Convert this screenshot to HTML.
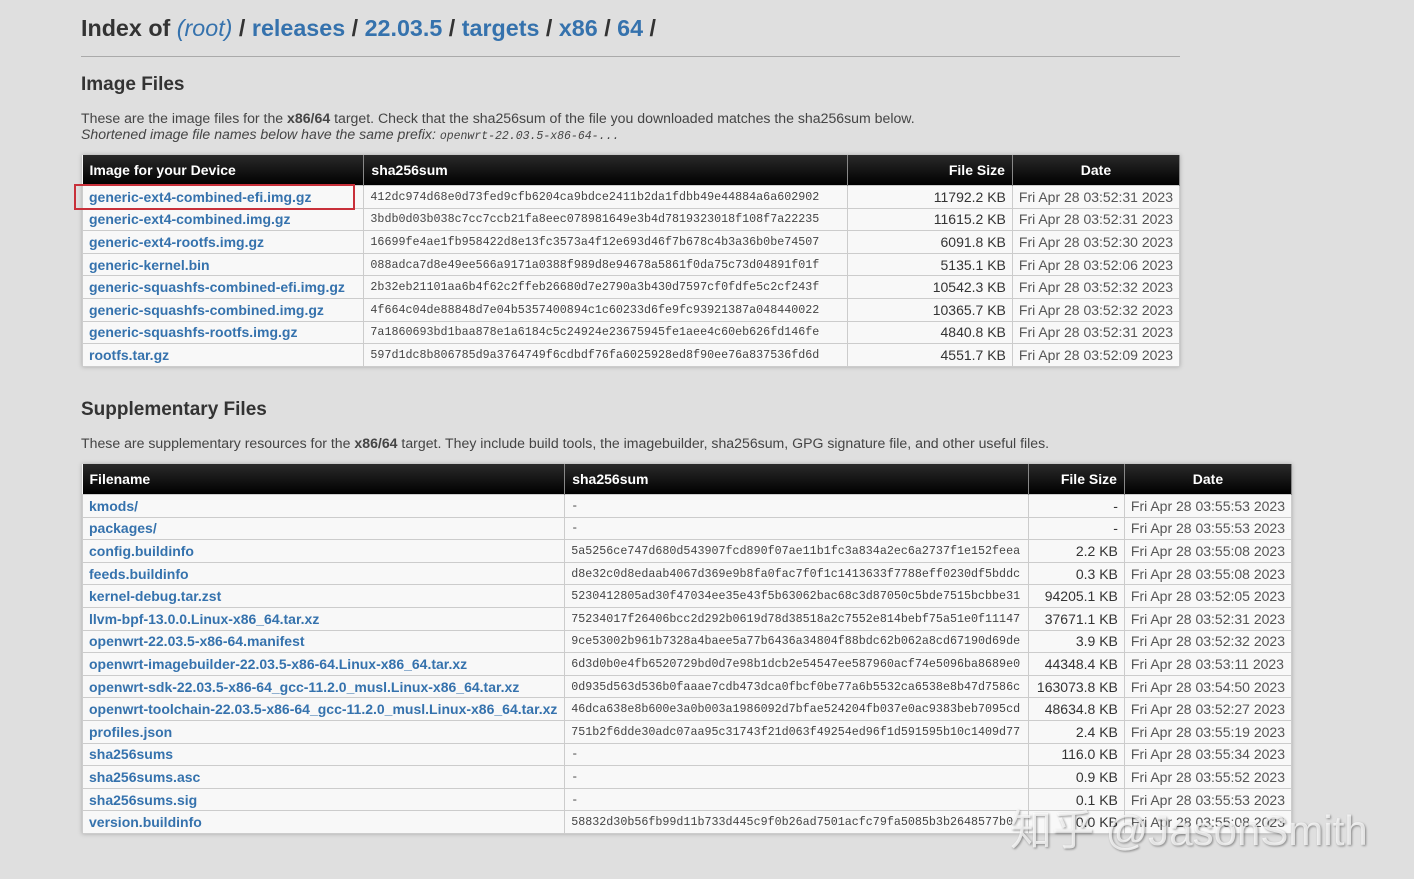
<!DOCTYPE html><html><head><meta charset="utf-8"><style>
body{margin:0;background:#dfdfdf;font-family:"Liberation Sans",sans-serif;color:#333;width:1414px;height:879px;overflow:hidden;position:relative}
h1{position:absolute;left:81px;top:15px;margin:0;font-size:23.3px;font-weight:bold;color:#333}
a{color:#3572ad;text-decoration:none}
.hr{position:absolute;left:81px;top:56px;width:1099px;border-top:1px solid #aaa}
h2{position:absolute;left:81px;margin:0;font-size:19px;font-weight:bold;color:#333}
p{position:absolute;left:81px;margin:0;font-size:14.1px;color:#444;line-height:16px}
table{position:absolute;left:82px;border-collapse:collapse;font-size:14px;box-shadow:0 0 4px #aaa;background:#f8f8f8}
th{background:linear-gradient(#2a2a2a,#000);color:#fff;font-weight:bold;text-align:left;padding:0 7px;height:30px;border-right:1px solid #888}
td{height:21.6px;padding:0 6px;border:1px solid #ccc;white-space:nowrap}
td.n a{font-weight:bold}
td.h{font-family:"Liberation Mono",monospace;font-size:11.7px;color:#444}
td.s,th.s{text-align:right}
th.d{text-align:center}
td.d{color:#555}
.wm{position:absolute;left:1010px;top:797px;font-size:42px;color:rgba(255,255,255,.75);font-family:"Liberation Sans","Noto Sans CJK SC",sans-serif;text-shadow:1px 1px 2px rgba(0,0,0,.4)}
</style></head><body>
<h1>Index of <a href="#"><i style="font-weight:normal">(root)</i></a> / <a href="#">releases</a> / <a href="#">22.03.5</a> / <a href="#">targets</a> / <a href="#">x86</a> / <a href="#">64</a> /</h1>
<div class="hr"></div>
<h2 style="top:74px">Image Files</h2>
<p style="top:110px">These are the image files for the <b>x86/64</b> target. Check that the sha256sum of the file you downloaded matches the sha256sum below.<br><i>Shortened image file names below have the same prefix: <span style="font-family:'Liberation Mono',monospace;font-size:11.5px">openwrt-22.03.5-x86-64-...</span></i></p>
<table style="top:155px;width:1098px">
<tr><th style="width:267px">Image for your Device</th><th style="width:469px">sha256sum</th><th class="s" style="width:150px">File Size</th><th class="d">Date</th></tr>
<tr><td class="n"><a href="#">generic-ext4-combined-efi.img.gz</a></td><td class="h">412dc974d68e0d73fed9cfb6204ca9bdce2411b2da1fdbb49e44884a6a602902</td><td class="s">11792.2 KB</td><td class="d">Fri Apr 28 03:52:31 2023</td></tr>
<tr><td class="n"><a href="#">generic-ext4-combined.img.gz</a></td><td class="h">3bdb0d03b038c7cc7ccb21fa8eec078981649e3b4d7819323018f108f7a22235</td><td class="s">11615.2 KB</td><td class="d">Fri Apr 28 03:52:31 2023</td></tr>
<tr><td class="n"><a href="#">generic-ext4-rootfs.img.gz</a></td><td class="h">16699fe4ae1fb958422d8e13fc3573a4f12e693d46f7b678c4b3a36b0be74507</td><td class="s">6091.8 KB</td><td class="d">Fri Apr 28 03:52:30 2023</td></tr>
<tr><td class="n"><a href="#">generic-kernel.bin</a></td><td class="h">088adca7d8e49ee566a9171a0388f989d8e94678a5861f0da75c73d04891f01f</td><td class="s">5135.1 KB</td><td class="d">Fri Apr 28 03:52:06 2023</td></tr>
<tr><td class="n"><a href="#">generic-squashfs-combined-efi.img.gz</a></td><td class="h">2b32eb21101aa6b4f62c2ffeb26680d7e2790a3b430d7597cf0fdfe5c2cf243f</td><td class="s">10542.3 KB</td><td class="d">Fri Apr 28 03:52:32 2023</td></tr>
<tr><td class="n"><a href="#">generic-squashfs-combined.img.gz</a></td><td class="h">4f664c04de88848d7e04b5357400894c1c60233d6fe9fc93921387a048440022</td><td class="s">10365.7 KB</td><td class="d">Fri Apr 28 03:52:32 2023</td></tr>
<tr><td class="n"><a href="#">generic-squashfs-rootfs.img.gz</a></td><td class="h">7a1860693bd1baa878e1a6184c5c24924e23675945fe1aee4c60eb626fd146fe</td><td class="s">4840.8 KB</td><td class="d">Fri Apr 28 03:52:31 2023</td></tr>
<tr><td class="n"><a href="#">rootfs.tar.gz</a></td><td class="h">597d1dc8b806785d9a3764749f6cdbdf76fa6025928ed8f90ee76a837536fd6d</td><td class="s">4551.7 KB</td><td class="d">Fri Apr 28 03:52:09 2023</td></tr>
</table>
<div style="position:absolute;left:74px;top:184px;width:281px;height:26px;border:2px solid #c8303a;box-sizing:border-box"></div>
<h2 style="top:399px">Supplementary Files</h2>
<p style="top:435px">These are supplementary resources for the <b>x86/64</b> target. They include build tools, the imagebuilder, sha256sum, GPG signature file, and other useful files.</p>
<table style="top:464px;width:1210px">
<tr><th style="width:468px">Filename</th><th style="width:449px">sha256sum</th><th class="s" style="width:82px">File Size</th><th class="d">Date</th></tr>
<tr><td class="n"><a href="#">kmods/</a></td><td class="h">-</td><td class="s">-</td><td class="d">Fri Apr 28 03:55:53 2023</td></tr>
<tr><td class="n"><a href="#">packages/</a></td><td class="h">-</td><td class="s">-</td><td class="d">Fri Apr 28 03:55:53 2023</td></tr>
<tr><td class="n"><a href="#">config.buildinfo</a></td><td class="h">5a5256ce747d680d543907fcd890f07ae11b1fc3a834a2ec6a2737f1e152feea</td><td class="s">2.2 KB</td><td class="d">Fri Apr 28 03:55:08 2023</td></tr>
<tr><td class="n"><a href="#">feeds.buildinfo</a></td><td class="h">d8e32c0d8edaab4067d369e9b8fa0fac7f0f1c1413633f7788eff0230df5bddc</td><td class="s">0.3 KB</td><td class="d">Fri Apr 28 03:55:08 2023</td></tr>
<tr><td class="n"><a href="#">kernel-debug.tar.zst</a></td><td class="h">5230412805ad30f47034ee35e43f5b63062bac68c3d87050c5bde7515bcbbe31</td><td class="s">94205.1 KB</td><td class="d">Fri Apr 28 03:52:05 2023</td></tr>
<tr><td class="n"><a href="#">llvm-bpf-13.0.0.Linux-x86_64.tar.xz</a></td><td class="h">75234017f26406bcc2d292b0619d78d38518a2c7552e814bebf75a51e0f11147</td><td class="s">37671.1 KB</td><td class="d">Fri Apr 28 03:52:31 2023</td></tr>
<tr><td class="n"><a href="#">openwrt-22.03.5-x86-64.manifest</a></td><td class="h">9ce53002b961b7328a4baee5a77b6436a34804f88bdc62b062a8cd67190d69de</td><td class="s">3.9 KB</td><td class="d">Fri Apr 28 03:52:32 2023</td></tr>
<tr><td class="n"><a href="#">openwrt-imagebuilder-22.03.5-x86-64.Linux-x86_64.tar.xz</a></td><td class="h">6d3d0b0e4fb6520729bd0d7e98b1dcb2e54547ee587960acf74e5096ba8689e0</td><td class="s">44348.4 KB</td><td class="d">Fri Apr 28 03:53:11 2023</td></tr>
<tr><td class="n"><a href="#">openwrt-sdk-22.03.5-x86-64_gcc-11.2.0_musl.Linux-x86_64.tar.xz</a></td><td class="h">0d935d563d536b0faaae7cdb473dca0fbcf0be77a6b5532ca6538e8b47d7586c</td><td class="s">163073.8 KB</td><td class="d">Fri Apr 28 03:54:50 2023</td></tr>
<tr><td class="n"><a href="#">openwrt-toolchain-22.03.5-x86-64_gcc-11.2.0_musl.Linux-x86_64.tar.xz</a></td><td class="h">46dca638e8b600e3a0b003a1986092d7bfae524204fb037e0ac9383beb7095cd</td><td class="s">48634.8 KB</td><td class="d">Fri Apr 28 03:52:27 2023</td></tr>
<tr><td class="n"><a href="#">profiles.json</a></td><td class="h">751b2f6dde30adc07aa95c31743f21d063f49254ed96f1d591595b10c1409d77</td><td class="s">2.4 KB</td><td class="d">Fri Apr 28 03:55:19 2023</td></tr>
<tr><td class="n"><a href="#">sha256sums</a></td><td class="h">-</td><td class="s">116.0 KB</td><td class="d">Fri Apr 28 03:55:34 2023</td></tr>
<tr><td class="n"><a href="#">sha256sums.asc</a></td><td class="h">-</td><td class="s">0.9 KB</td><td class="d">Fri Apr 28 03:55:52 2023</td></tr>
<tr><td class="n"><a href="#">sha256sums.sig</a></td><td class="h">-</td><td class="s">0.1 KB</td><td class="d">Fri Apr 28 03:55:53 2023</td></tr>
<tr><td class="n"><a href="#">version.buildinfo</a></td><td class="h">58832d30b56fb99d11b733d445c9f0b26ad7501acfc79fa5085b3b2648577b0</td><td class="s">0.0 KB</td><td class="d">Fri Apr 28 03:55:08 2023</td></tr>
</table>
<div class="wm">知乎 @JasonSmith</div>
</body></html>
